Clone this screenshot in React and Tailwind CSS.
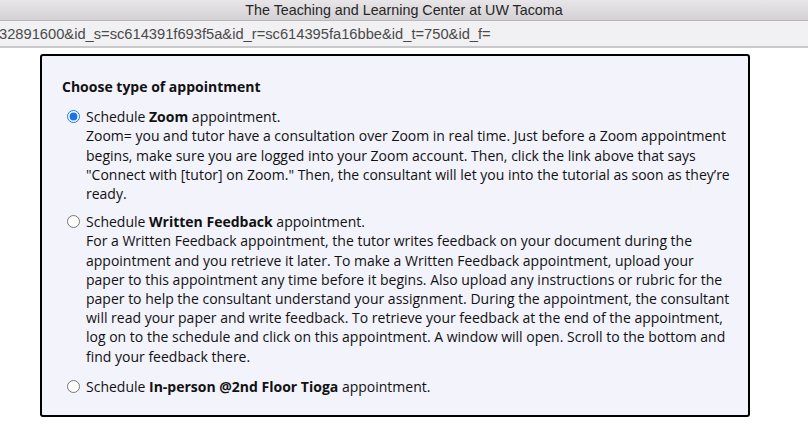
export default function App() {
  const font = { fontFamily: '"Open Sans", "Noto Sans", sans-serif' };
  const sys = { fontFamily: '"Liberation Sans", Arial, sans-serif' };
  return (
    <div className="w-[808px] h-[436px] overflow-hidden bg-white">
      <div className="h-[21px] bg-gradient-to-b from-[#e8e6e8] to-[#d3d1d3] border-b border-[#b8b6b8] flex items-center justify-center">
        <span className="text-[14.3px] text-[#262626] leading-none" style={sys}>The Teaching and Learning Center at UW Tacoma</span>
      </div>
      <div className="h-[27px] bg-[#f1f1f3] border-b-2 border-[#c9c9cb] flex items-center overflow-hidden whitespace-nowrap">
        <span className="text-[14.7px] text-[#4a4a4a] -ml-[1px] mt-[1px]" style={sys}>32891600&amp;id_s=sc614391f693f5a&amp;id_r=sc614395fa16bbe&amp;id_t=750&amp;id_f=</span>
      </div>
      <div className="pt-[6px] pl-[40px]">
        <div className="w-[710px] h-[363px] border-2 border-black rounded-[3px] bg-[#f3f3fc] pl-[20px] pt-[21px] text-[14px] leading-[19.2px] text-[#111]" style={font}>
          <div className="font-bold mb-[11px]">Choose type of appointment</div>
          <div className="flex items-start">
            <input type="radio" name="t" defaultChecked className="ml-[5px] mr-[6px] mt-[3px] w-[13px] h-[13px] accent-[#1a73e8]" />
            <div>
              <div>Schedule <b>Zoom</b> appointment.</div>
              <div>
                Zoom= you and tutor have a consultation over Zoom in real time. Just before a Zoom appointment<br />
                begins, make sure you are logged into your Zoom account. Then, click the link above that says<br />
                "Connect with [tutor] on Zoom." Then, the consultant will let you into the tutorial as soon as they’re<br />
                ready.
              </div>
            </div>
          </div>
          <div className="flex items-start mt-[9px]">
            <input type="radio" name="t" className="ml-[5px] mr-[6px] mt-[3px] w-[13px] h-[13px]" />
            <div>
              <div>Schedule <b>Written Feedback</b> appointment.</div>
              <div>
                For a Written Feedback appointment, the tutor writes feedback on your document during the<br />
                appointment and you retrieve it later. To make a Written Feedback appointment, upload your<br />
                paper to this appointment any time before it begins. Also upload any instructions or rubric for the<br />
                paper to help the consultant understand your assignment. During the appointment, the consultant<br />
                will read your paper and write feedback. To retrieve your feedback at the end of the appointment,<br />
                log on to the schedule and click on this appointment. A window will open. Scroll to the bottom and<br />
                find your feedback there.
              </div>
            </div>
          </div>
          <div className="flex items-start mt-[11px]">
            <input type="radio" name="t" className="ml-[5px] mr-[6px] mt-[3px] w-[13px] h-[13px]" />
            <div>Schedule <b>In-person @2nd Floor Tioga</b> appointment.</div>
          </div>
        </div>
      </div>
    </div>
  );
}
